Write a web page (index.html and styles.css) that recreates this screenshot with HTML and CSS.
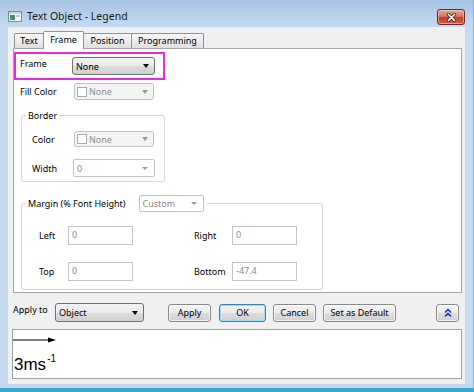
FILE: index.html
```html
<!DOCTYPE html>
<html lang="en">
<head>
<meta charset="utf-8">
<title>Text Object - Legend</title>
<link rel="stylesheet" href="styles.css">
</head>
<body>
<div class="window">
  <div class="titlebar">
    <svg class="app-icon" width="14" height="11" viewBox="0 0 14 11">
      <rect x="0.5" y="0.5" width="13" height="10" fill="#f4f7fa" stroke="#7d8a98"/>
      <rect x="1" y="1" width="12" height="2" fill="#c9d6e3"/>
      <rect x="2" y="4" width="5" height="5" fill="#3f8c6e"/>
      <rect x="8" y="4" width="4" height="2" fill="#b9c7d6"/>
    </svg>
    <span class="title">Text Object - Legend</span>
    <div class="close-btn">
      <svg width="11" height="9" viewBox="0 0 11 9">
        <path d="M2.5 1.5 L8.5 7.5 M8.5 1.5 L2.5 7.5" stroke="#6a2019" stroke-width="3.2" stroke-linecap="round"/>
        <path d="M2.5 1.5 L8.5 7.5 M8.5 1.5 L2.5 7.5" stroke="#ffffff" stroke-width="1.7" stroke-linecap="round"/>
      </svg>
    </div>
  </div>
  <div class="client">
    <div class="tabs">
      <div class="tab tab-text">Text</div>
      <div class="tab tab-frame active">Frame</div>
      <div class="tab tab-position">Position</div>
      <div class="tab tab-programming">Programming</div>
    </div>
    <div class="panel">
      <div class="frame-box">
        <span class="label label-frame">Frame</span>
        <div class="combo combo-frame"><span class="combo-text">None</span><span class="arrow"></span></div>
      </div>
      <div class="row fill-row">
        <span class="label label-fill">Fill Color</span>
        <div class="combo combo-disabled combo-fill"><span class="swatch"></span><span class="combo-text">None</span><span class="arrow"></span></div>
      </div>
      <fieldset class="group group-border">
        <legend class="group-title">Border</legend>
        <div class="row border-color-row">
          <span class="label label-border">Color</span>
          <div class="combo combo-disabled combo-color"><span class="swatch"></span><span class="combo-text">None</span><span class="arrow"></span></div>
        </div>
        <div class="row border-width-row">
          <span class="label label-border">Width</span>
          <div class="combo combo-edit combo-width"><span class="combo-text">0</span><span class="arrow arrow-small"></span></div>
        </div>
      </fieldset>
      <fieldset class="group group-margin">
        <legend class="group-title margin-title">
          <span>Margin (% Font Height)</span>
          <span class="combo combo-edit combo-custom"><span class="combo-text">Custom</span><span class="arrow arrow-small"></span></span>
        </legend>
        <div class="margin-grid">
          <span class="label">Left</span><div class="field">0</div>
          <span class="label">Right</span><div class="field">0</div>
          <span class="label">Top</span><div class="field">0</div>
          <span class="label">Bottom</span><div class="field">-47.4</div>
        </div>
      </fieldset>
    </div>
    <div class="actions">
      <span class="label label-apply">Apply to</span>
      <div class="combo combo-object"><span class="combo-text">Object</span><span class="arrow"></span></div>
      <button class="btn btn-apply">Apply</button>
      <button class="btn btn-ok">OK</button>
      <button class="btn btn-cancel">Cancel</button>
      <button class="btn btn-default">Set as Default</button>
      <button class="btn btn-expand">
        <svg width="8" height="10" viewBox="0 0 8 10">
          <path d="M1 4.5 L4 1.5 L7 4.5 M1 8.5 L4 5.5 L7 8.5" fill="none" stroke="#1a3cc8" stroke-width="1.6"/>
        </svg>
      </button>
    </div>
    <div class="preview">
      <svg class="vector-arrow" width="44" height="6" viewBox="0 0 44 6">
        <line x1="0" y1="3" x2="38" y2="3" stroke="#000" stroke-width="1"/>
        <path d="M35 0.5 L43 3 L35 5.5 Z" fill="#000"/>
      </svg>
      <div class="legend-text">3ms<sup class="exp">-1</sup></div>
    </div>
  </div>
</div>
</body>
</html>
```

FILE: styles.css
```css
* { box-sizing: border-box; }

html, body {
  margin: 0;
  padding: 0;
}

body {
  width: 474px;
  height: 392px;
  overflow: hidden;
  background: #3aa8d6;
  font-family: "Noto Sans", "Open Sans", sans-serif;
  font-size: 9px;
  color: #000;
}

.window {
  width: 474px;
  height: 388px;
  background: #c5d9ef;
  border-right: 1px solid #8fb1d4;
  display: flex;
  flex-direction: column;
}

/* ---------- title bar ---------- */
.titlebar {
  height: 27px;
  flex: none;
  display: flex;
  align-items: flex-start;
  padding-left: 8px;
  background: linear-gradient(#a7c2e3 0%, #b6cde9 45%, #c6d9ef 100%);
}

.app-icon {
  margin-top: 11px;
  flex: none;
}

.title {
  margin-left: 5px;
  margin-top: 9px;
  font-size: 10.5px;
  line-height: 14px;
  color: #1b1b1b;
}

.close-btn {
  margin-left: auto;
  margin-right: 8px;
  margin-top: 9px;
  width: 28px;
  height: 16px;
  border: 1px solid #6b2a24;
  border-radius: 3px;
  background: linear-gradient(#e8a898 0%, #d57562 45%, #c0402c 55%, #cf5f45 100%);
  display: flex;
  align-items: center;
  justify-content: center;
  box-shadow: inset 0 0 0 1px rgba(255, 220, 210, 0.5);
}

/* ---------- client area ---------- */
.client {
  margin: 0 8px;
  height: 357px;
  background: #f0f0f0;
  padding: 4px 4px 0 4px;
  display: flex;
  flex-direction: column;
}

.tabs {
  display: flex;
  height: 17px;
  padding-left: 2px;
  position: relative;
  z-index: 2;
}

.tab {
  height: 15px;
  margin-top: 2px;
  margin-right: -1px;
  border: 1px solid #8e9299;
  border-bottom: none;
  border-radius: 2px 2px 0 0;
  background: linear-gradient(#f6f6f6 0%, #ececec 50%, #dedede 100%);
  text-align: center;
  line-height: 13px;
  font-size: 9px;
}

.tab.active {
  height: 18px;
  margin-top: 0;
  background: #fff;
  line-height: 16px;
}

.tab-text { width: 30px; }
.tab-frame { width: 41px; }
.tab-position { width: 49px; }
.tab-programming { width: 73px; }

.panel {
  margin-left: 1px;
  width: 449px;
  height: 245px;
  border: 1px solid #a3a6ab;
  background: #fff;
  display: flex;
  flex-direction: column;
  align-items: flex-start;
  position: relative;
  z-index: 1;
}

.label {
  line-height: 11px;
  white-space: nowrap;
}

.row {
  display: flex;
  align-items: center;
}

/* ---------- combos ---------- */
.combo {
  display: flex;
  align-items: center;
  border: 1px solid #707070;
  border-radius: 3px;
  background: linear-gradient(#f3f3f3 0%, #ebebeb 50%, #dddddd 51%, #d0d0d0 100%);
  padding-left: 3px;
  line-height: 11px;
  flex: none;
}

.combo-text { white-space: nowrap; }

.arrow {
  margin-left: auto;
  margin-right: 5px;
  width: 0;
  height: 0;
  border-left: 3.5px solid transparent;
  border-right: 3.5px solid transparent;
  border-top: 4px solid #000;
}

.combo-disabled {
  border-color: #c2c2c2;
  background: #f4f4f4;
  color: #8d8d8d;
  padding-left: 2px;
}

.combo-disabled .arrow { border-top-color: #9a9a9a; }

.swatch {
  width: 10px;
  height: 10px;
  border: 1px solid #a8a8a8;
  background: #fff;
  margin-right: 2px;
}

.combo-edit {
  border-color: #c4c4c4;
  border-radius: 2px;
  background: #fff;
  color: #8a8a8a;
}

.arrow-small {
  margin-right: 6px;
  border-left-width: 3px;
  border-right-width: 3px;
  border-top: 3px solid #9a9a9a;
}

/* ---------- frame highlight ---------- */
.frame-box {
  margin-top: 3px;
  width: 151px;
  height: 28px;
  border: 2px solid #e22be2;
  display: flex;
  align-items: flex-start;
  padding: 3px 0 0 4px;
}

.label-frame {
  width: 52px;
  padding-top: 1px;
}

.combo-frame {
  width: 83px;
  height: 18px;
}

.fill-row {
  margin-top: 3px;
  padding-left: 6px;
}

.label-fill { width: 54px; }

.combo-fill {
  width: 80px;
  height: 17px;
}

/* ---------- group boxes ---------- */
.group {
  margin: 0;
  padding: 0;
  min-width: 0;
  border: 1px solid #d6d6d6;
  border-radius: 3px;
}

.group-title {
  margin-left: 4px;
  padding: 0 2px;
  line-height: 11px;
}

.group-border {
  margin: 10px 0 0 7px;
  width: 144px;
  padding: 0 0 4px 0;
}

.group-border .row { padding-left: 10px; }

.label-border { width: 42px; }

.border-color-row { margin-top: 10px; }

.combo-color {
  width: 80px;
  height: 16px;
}

.border-width-row { margin-top: 12px; }

.combo-width {
  width: 82px;
  height: 18px;
  margin-left: -1px;
}

.group-margin {
  margin: 13px 0 0 7px;
  width: 302px;
  padding: 0 0 8px 0;
}

.margin-title {
  display: flex;
  align-items: center;
  padding: 0 3px 0 2px;
}

.combo-custom {
  margin-left: 13px;
  width: 65px;
  height: 17px;
}

.margin-grid {
  margin-top: 14px;
  padding-left: 17px;
  display: grid;
  grid-template-columns: 29px 126px 38px 65px;
  grid-auto-rows: 19px;
  row-gap: 17px;
  align-items: center;
}

.field {
  width: 65px;
  height: 19px;
  border: 1px solid #c4c4c4;
  background: #fff;
  color: #8a8a8a;
  padding-left: 3px;
  line-height: 16px;
}

/* ---------- actions ---------- */
.actions {
  margin-top: 10px;
  height: 19px;
  display: flex;
  align-items: center;
  padding-left: 1px;
  padding-right: 2px;
}

.label-apply {
  width: 42px;
  align-self: flex-start;
  padding-top: 1px;
}

.combo-object {
  width: 89px;
  height: 19px;
}

.btn {
  font-family: inherit;
  font-size: 9px;
  color: #000;
  height: 18px;
  padding: 0;
  border: 1px solid #8a8a8a;
  border-radius: 3px;
  background: linear-gradient(#f3f3f3 0%, #ebebeb 50%, #dddddd 51%, #d0d0d0 100%);
  box-shadow: inset 0 0 0 1px rgba(255, 255, 255, 0.7);
  line-height: 14px;
  flex: none;
}

.btn-apply { margin-left: 24px; width: 43px; }

.btn-ok {
  margin-left: 8px;
  width: 47px;
  border-color: #3c7fb1;
  box-shadow: inset 0 0 0 1px #9fdcf9;
}

.btn-cancel { margin-left: 7px; width: 43px; }
.btn-default { margin-left: 7px; width: 73px; }

.btn-expand {
  margin-left: auto;
  width: 23px;
  display: flex;
  align-items: center;
  justify-content: center;
}

/* ---------- preview ---------- */
.preview {
  margin-top: 7px;
  width: 450px;
  height: 50px;
  border: 1px solid #a0a0a0;
  background: #fff;
  display: flex;
  flex-direction: column;
  align-items: flex-start;
}

.vector-arrow {
  margin-top: 7px;
  flex: none;
}

.legend-text {
  margin-top: 12px;
  padding-left: 1px;
  font-family: "Liberation Sans", Arial, sans-serif;
  font-size: 17px;
  line-height: 20px;
}

.exp {
  font-size: 10px;
  line-height: 0;
  vertical-align: 8px;
  margin-left: 1px;
}
```
